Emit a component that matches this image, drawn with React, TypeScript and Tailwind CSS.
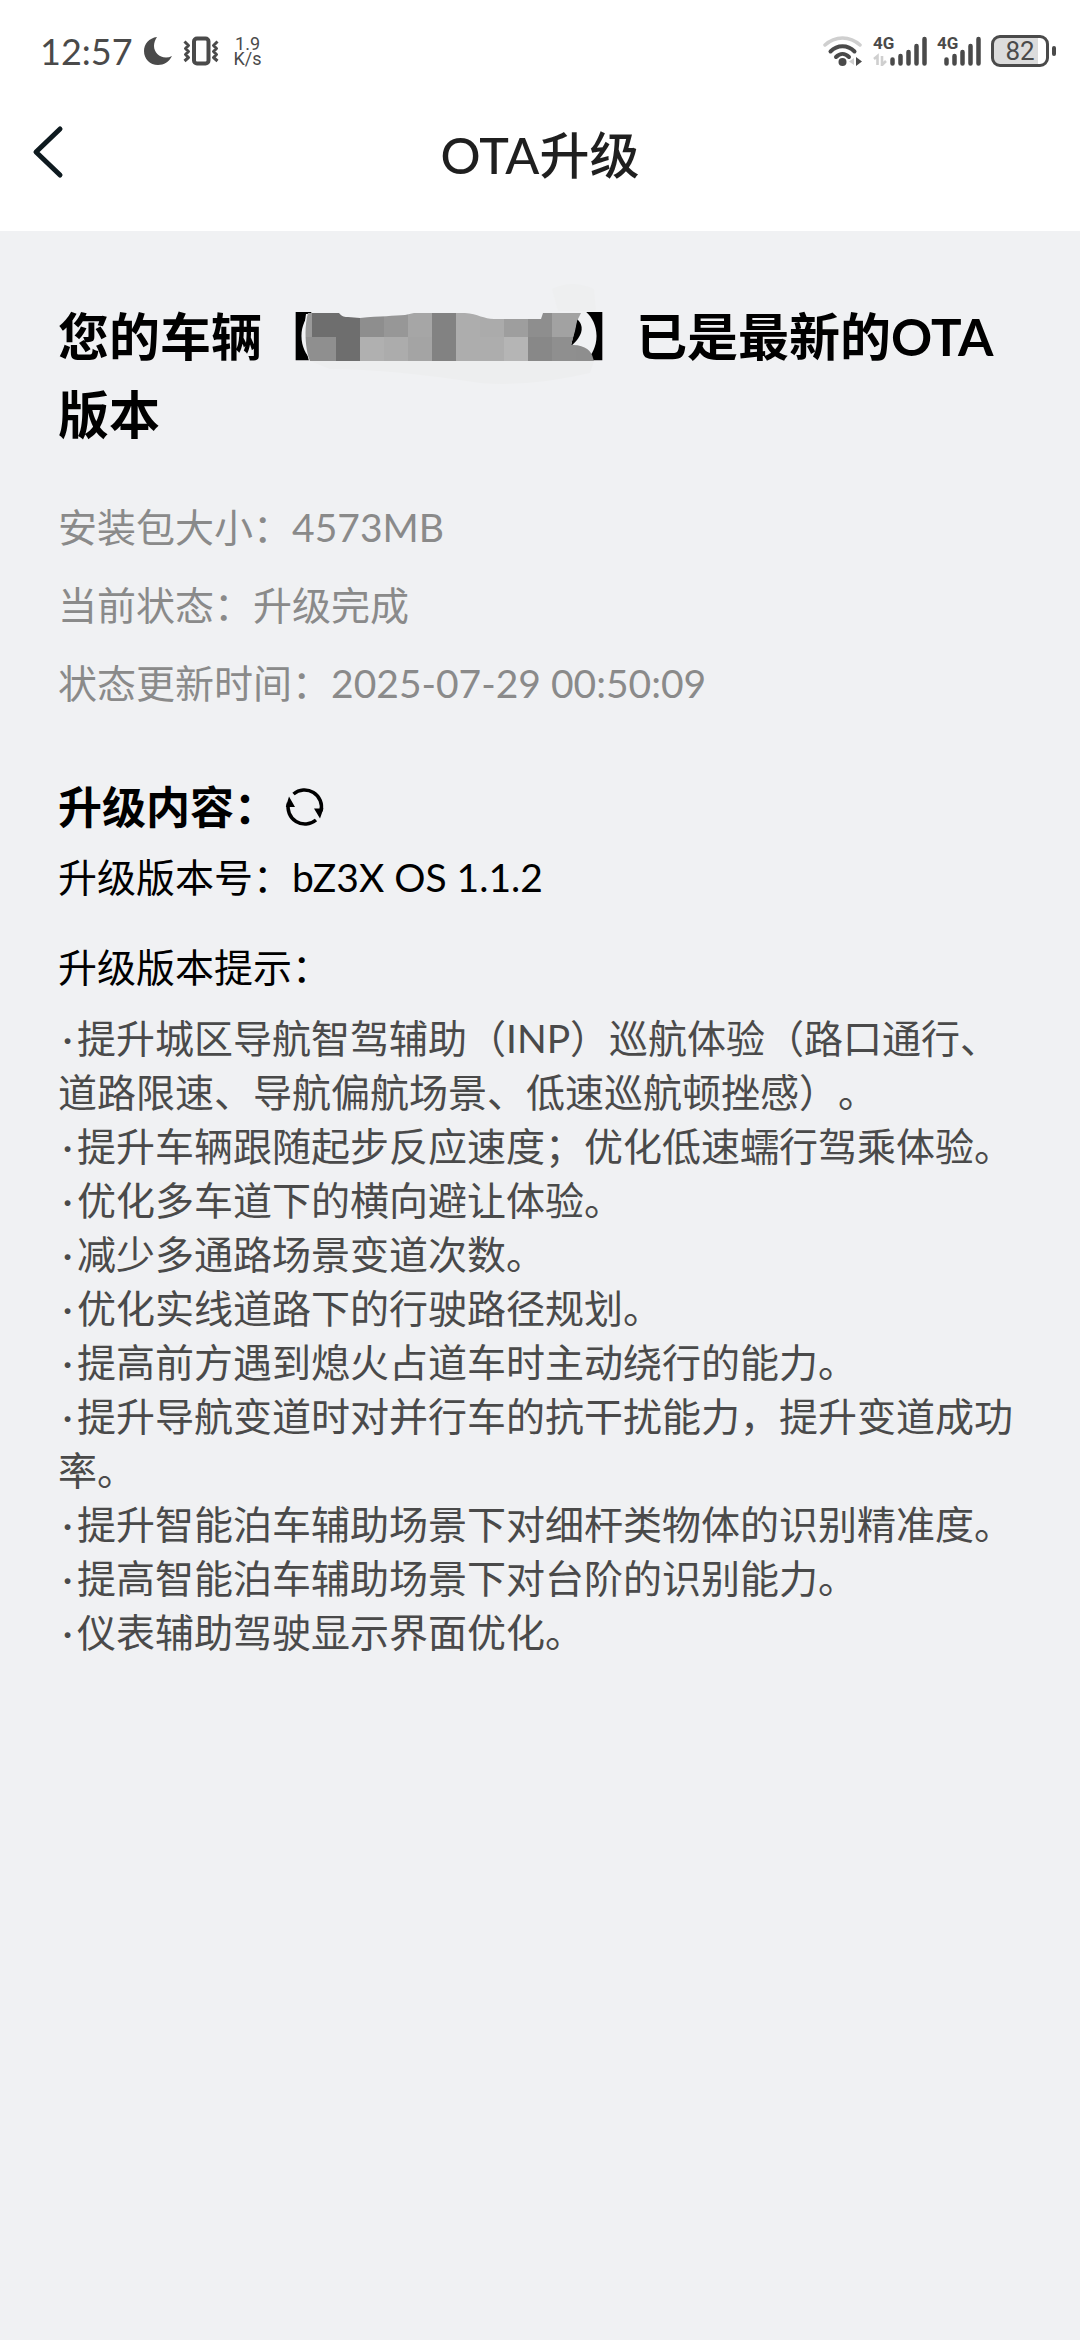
const notes = [
  '提升城区导航智驾辅助（INP）巡航体验（路口通行、道路限速、导航偏航场景、低速巡航顿挫感）。',
  '提升车辆跟随起步反应速度；优化低速蠕行驾乘体验。',
  '优化多车道下的横向避让体验。',
  '减少多通路场景变道次数。',
  '优化实线道路下的行驶路径规划。',
  '提高前方遇到熄火占道车时主动绕行的能力。',
  '提升导航变道时对并行车的抗干扰能力，提升变道成功率。',
  '提升智能泊车辅助场景下对细杆类物体的识别精准度。',
  '提高智能泊车辅助场景下对台阶的识别能力。',
  '仪表辅助驾驶显示界面优化。',
]

const details = [
  { label: '安装包大小', value: '4573MB' },
  { label: '当前状态', value: '升级完成' },
  { label: '状态更新时间', value: '2025-07-29 00:50:09' },
]

// two rows of mosaic cells that hide the plate number
const mosaic = [
  ['#999999', '#6e6e6e', '#6e6e6e', '#8e8e8e', '#979797', '#a6a6a6', '#828282', '#adadad', '#ababab', '#9e9e9e', '#8e8e8e', '#a2a2a2', '#a2a2a2'],
  ['#8f8f8f', '#8f8f8f', '#6e6e6e', '#b0b0b0', '#acacac', '#a4a4a4', '#828282', '#adadad', '#adadad', '#b5b5b5', '#888888', '#8f8f8f', '#8e8e8e'],
]

function MoonIcon() {
  return (
    <svg className="h-[30px] w-[28px]" viewBox="0 0 28 30" fill="currentColor" aria-hidden="true">
      <path d="M13 1C5 2 0 8 0 15c0 8 6 14 14 14 6 0 11-3 14-9-2 1-4 1.500-6 1.500C15 21.500 10 16 10 10c0-3 1-6 3-9z" />
    </svg>
  )
}

function VibrateIcon() {
  return (
    <svg className="h-[30px] w-[36px]" viewBox="0 0 36 30" fill="none" stroke="currentColor" aria-hidden="true">
      <rect x="11" y="2.500" width="14.500" height="25" rx="3" strokeWidth="4" />
      <path d="M1.500 5.500l4 4-3 3 3 3-3 3 3 3-4 3.500M34.500 5.500l-4 4 3 3-3 3 3 3-3 3 4 3.500" strokeWidth="3" strokeLinejoin="round" />
    </svg>
  )
}

function WifiIcon() {
  return (
    <svg className="h-[30px] w-[40px]" viewBox="0 0 40 30" fill="none" stroke="currentColor" strokeLinecap="round" aria-hidden="true">
      <path d="M2 9C12-.5 27-.5 37 9" stroke="#cfcfcf" strokeWidth="3.500" />
      <path d="M7.500 15.500c7-7 17-7 24 0" strokeWidth="4" />
      <path d="M13 21c4-4 9-4 13 0" strokeWidth="4" />
      <circle cx="19.500" cy="26" r="4" fill="currentColor" stroke="none" />
      <path d="M31 22v7l-5-3.500z" fill="#cfcfcf" stroke="none" />
      <path d="M33 21v9l6-4.500z" fill="currentColor" stroke="none" />
    </svg>
  )
}

function SignalBars() {
  return (
    <svg className="h-[30px] w-[37px]" viewBox="0 0 37 30" fill="none" stroke="currentColor" strokeWidth="4.500" strokeLinecap="round" aria-hidden="true">
      <path d="M2.500 23.500v4M10.500 20v7.500M18.500 16v11.500M26.500 10v17.500M34.500 3v24.500" />
    </svg>
  )
}

function Signal({ idle }: { idle?: boolean }) {
  return (
    <div className="relative flex h-[30px] items-end">
      <span className="absolute -top-[4px] left-0 font-['Roboto',sans-serif] text-[17px] leading-[22px] font-bold">4G</span>
      {idle ? (
        <svg className="h-[30px] w-[17px]" viewBox="0 0 17 30" fill="none" stroke="#cfcfcf" strokeWidth="2.600" aria-hidden="true">
          <path d="M1 23l3.500-3v9M9 20v9l4-4" />
        </svg>
      ) : (
        <span className="w-[7px]" />
      )}
      <SignalBars />
    </div>
  )
}

function StatusBar() {
  return (
    <div className="flex h-[102px] items-center justify-between pr-[24px] pl-[40px] text-[#4a4a4a]">
      <div className="flex items-center gap-[11px]">
        <span className="text-[36px] leading-[44px]">12:57</span>
        <MoonIcon />
        <VibrateIcon />
        <span className="ml-[4px] text-center font-['Roboto',sans-serif] text-[18px] leading-[15px]">
          1.9
          <br />
          K/s
        </span>
      </div>
      <div className="flex items-center gap-[10px]">
        <WifiIcon />
        <Signal idle />
        <Signal />
        <div className="flex items-center gap-[3px]">
          <div className="flex h-[32px] w-[58px] items-center justify-center rounded-[9px] border-[3px] border-[#4a4a4a] bg-linear-to-r from-[#dcdcdc] from-85% to-white to-85% font-['Roboto',sans-serif] text-[26px] leading-[26px]">
            82
          </div>
          <div className="h-[10px] w-[4px] rounded-full bg-[#4a4a4a]" />
        </div>
      </div>
    </div>
  )
}

function HiddenPlate() {
  return (
    <span className="relative inline-block h-[78px] w-[272px] align-top">
      <svg className="absolute -top-[15px] -left-[13px] h-[112px] w-[310px]" viewBox="0 0 310 112" role="img" aria-label="车牌号已隐藏">
        <clipPath id="plate">
          <path d="M8 2H39C42 6 45 6 48 6L60 7C80 5 95 5 105 4L114 2H165C178 3 184 8 194 8H241L243 2H281L277 10 275 20 271 34C284 33 292 40 293 47L294 50H10C5 38 4 16 8 2z" />
        </clipPath>
        <path d="M252 6q20-10 42 0l2 22h-38z" fill="#eeeff0" />
        <path d="M10 78H294l-4 12q-60 14-110 10Q90 86 30 86z" fill="#edeeef" />
        <g transform="translate(0 28)">
          <path d="M6 3h6v47H9Q1 26 6 3z" fill="#f0f1f3" />
          <path d="M277 8C284 14 284 24 271 35z" fill="#000" />
          <g clipPath="url(#plate)" shapeRendering="crispEdges">
            {mosaic.map((row, y) =>
              row.map((color, x) => <rect key={`${x}-${y}`} x={x * 24 - 12} y={y * 24 + 2} width="24" height="24" fill={color} />)
            )}
          </g>
        </g>
      </svg>
    </span>
  )
}

export default function App() {
  return (
    <div className="min-h-screen bg-[#f0f1f3] font-['Lato','Noto_Sans_CJK_SC',sans-serif] text-black [text-spacing-trim:space-all]" lang="zh-CN">
      <header className="bg-white">
        <StatusBar />
        <div className="grid h-[129px] grid-cols-[80px_1fr_80px] items-start">
          <button type="button" aria-label="返回" className="flex h-[100px] items-center pl-[32px]">
            <svg className="h-[54px] w-[32px]" viewBox="0 0 32 54" fill="none" stroke="#0e1a1f" strokeWidth="5" strokeLinecap="round" strokeLinejoin="round">
              <path d="M28 4L4 27l24 23" />
            </svg>
          </button>
          <h1 className="pt-[18px] text-center text-[50px] leading-[70px] font-medium text-[#1f1f1f]">OTA升级</h1>
        </div>
      </header>

      <main className="px-[58px] pt-[67px]">
        <h2 className="text-[51px] leading-[78px] font-bold">
          您的车辆【<HiddenPlate />】已是最新的OTA版本
        </h2>

        <dl className="mt-[34px] text-[39px] leading-[78px] text-[#8a8a8a]">
          {details.map((item) => (
            <div key={item.label} className="flex">
              <dt>{item.label}：</dt>
              <dd>{item.value}</dd>
            </div>
          ))}
        </dl>

        <section className="mt-[54px]">
          <div className="flex items-center">
            <h3 className="text-[44px] leading-[62px] font-bold">升级内容：</h3>
            <button type="button" aria-label="刷新" className="ml-[7px]">
              <svg className="size-[40px]" viewBox="0 0 40 40" fill="none" stroke="currentColor" strokeWidth="3.500">
                <path d="M8.500 7A17 17 0 0 1 36 24M31 33A17 17 0 0 1 3.500 16" />
                <path d="M29 21.500h9.500L35 31.500zM10 20H.8L4 9.500z" fill="currentColor" stroke="none" />
              </svg>
            </button>
          </div>
          <p className="text-[39px] leading-[78px]">升级版本号：bZ3X OS 1.1.2</p>
          <h4 className="mt-[12px] text-[39px] leading-[78px]">升级版本提示：</h4>
          <ul className="mt-[5px] text-[39px] leading-[54px] text-[#4a4a4a]">
            {notes.map((note) => (
              <li key={note}>
                <span className="inline-block w-[19px] text-center">·</span>
                {note}
              </li>
            ))}
          </ul>
        </section>
      </main>
    </div>
  )
}
